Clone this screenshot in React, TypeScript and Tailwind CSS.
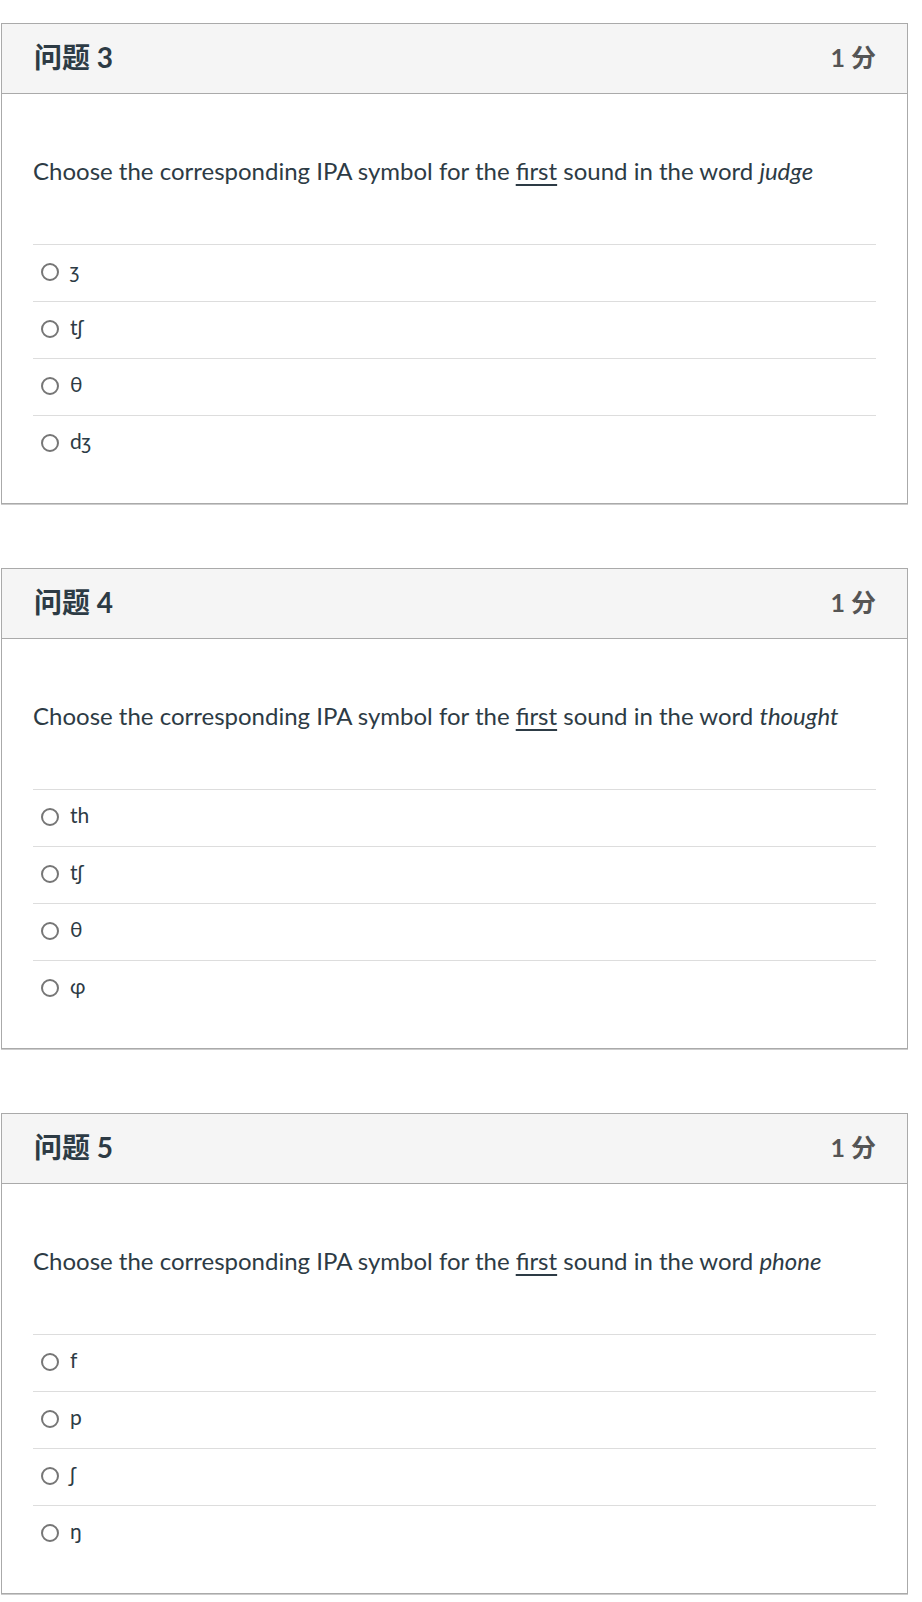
import type { ReactNode } from "react";

type Question = {
  number: number;
  word: string;
  answers: string[];
};

const questions: Question[] = [
  { number: 3, word: "judge", answers: ["ʒ", "tʃ", "θ", "dʒ"] },
  { number: 4, word: "thought", answers: ["th", "tʃ", "θ", "φ"] },
  { number: 5, word: "phone", answers: ["f", "p", "ʃ", "ŋ"] },
];

const font = "font-['Lato','Noto_Sans_CJK_SC',sans-serif]";

const AnswerRow = ({ children }: { children: ReactNode }) => (
  <label className="flex h-[57px] items-center border-t border-[#dddddd]">
    <span className="mb-[2px] ml-[8px] h-[18px] w-[18px] shrink-0 rounded-full border-2 border-[#767676] bg-white" />
    <span className="ml-[11px] pb-[8px] text-[21px] leading-none text-[#2d3b45]">{children}</span>
  </label>
);

const QuestionCard = ({ question }: { question: Question }) => (
  <div className="ml-px w-[907px] border border-[#aaaaaa] bg-white shadow-[0_1px_0_#cccccc]">
    <div className="flex h-[70px] items-center justify-between border-b border-[#aaaaaa] bg-[#f5f5f5] pl-[32px] pr-[31px]">
      <h2 className="pb-[4px] text-[28px] font-bold leading-none text-[#2d3b45]">问题 {question.number}</h2>
      <span className="pb-[3px] text-[25px] font-bold leading-none text-[#555555]">1 分</span>
    </div>
    <div className="px-[31px] pb-[31px]">
      <p className="mt-[60px] mb-[57px] text-[24px] leading-[33px] text-[#2d3b45]">
        Choose the corresponding IPA symbol for the <span className="underline decoration-[1.5px] underline-offset-[4px]">first</span> sound in the word{" "}
        <em>{question.word}</em>
      </p>
      {question.answers.map((a) => (
        <AnswerRow key={a}>{a}</AnswerRow>
      ))}
    </div>
  </div>
);

export default function App() {
  return (
    <div className={`${font} min-h-[1602px] bg-white pt-[23px]`}>
      <div className="flex flex-col gap-[64px]">
        {questions.map((q) => (
          <QuestionCard key={q.number} question={q} />
        ))}
      </div>
    </div>
  );
}
